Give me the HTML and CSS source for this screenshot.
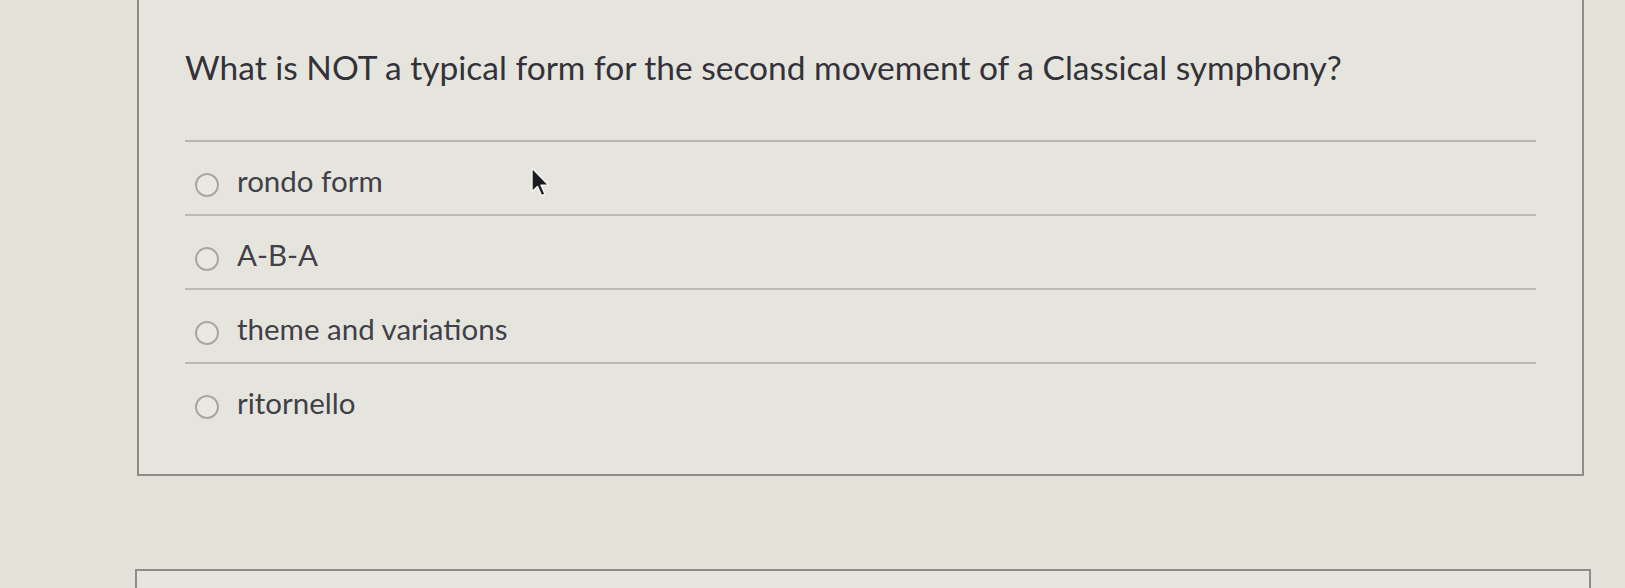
FILE: index.html
```html
<!DOCTYPE html>
<html lang="en">
<head>
<meta charset="utf-8">
<title>Quiz question</title>
<link rel="stylesheet" href="styles.css">
</head>
<body>
<main class="page">
  <section class="card">
    <div class="question">What is NOT a typical form for the second movement of a Classical symphony?</div>
    <ul class="answers">
      <li class="answer"><span class="radio"></span><span class="label">rondo form</span></li>
      <li class="answer"><span class="radio"></span><span class="label">A-B-A</span></li>
      <li class="answer"><span class="radio"></span><span class="label">theme and variations</span></li>
      <li class="answer"><span class="radio"></span><span class="label">ritornello</span></li>
    </ul>
  </section>
  <section class="card next"></section>
  <svg class="cursor" width="19" height="30" viewBox="0 0 12.6 20" aria-hidden="true">
    <path d="M0.6 0.6 L0.6 16.6 L4.3 13 L7 19.2 L9.3 18.2 L6.7 12.1 L11.8 12.1 Z" fill="#1c1b22" stroke="#f4f4f0" stroke-width="1" stroke-linejoin="round"/>
  </svg>
</main>
</body>
</html>
```

FILE: styles.css
```css
html, body {
  margin: 0;
  padding: 0;
}

body {
  background: #e3e2d9;
  font-family: Lato, "Open Sans", "Liberation Sans", sans-serif;
  overflow: hidden;
}

.page {
  position: relative;
  height: 588px;
}

.card {
  margin-left: 137px;
  width: 1447px;
  box-sizing: border-box;
  background: #e6e5dd;
  border: 2px solid #8d8c88;
  border-top: none;
  padding: 0 46px 38px 46px;
}

.question {
  padding-top: 47px;
  padding-bottom: 53px;
  border-bottom: 2px solid #b6b5ae;
  font-size: 33.5px;
  line-height: 40px;
  color: #33323a;
}

.answers {
  list-style: none;
  margin: 0;
  padding: 0;
}

.answer {
  display: flex;
  align-items: flex-start;
  padding: 21px 0 15px 0;
  border-bottom: 2px solid #b9b8b1;
}

.answer:last-child {
  border-bottom: none;
}

.radio {
  flex: none;
  width: 24px;
  height: 24px;
  box-sizing: border-box;
  margin: 10px 18px 0 10px;
  border: 2px solid #a8a7a2;
  border-radius: 50%;
  background: #e9e8e1;
}

.label {
  font-size: 29.5px;
  line-height: 36px;
  color: #413f47;
}

.card.next {
  margin-top: 93px;
  margin-left: 135px;
  width: 1456px;
  height: 40px;
  border-top: 2px solid #8d8c88;
  border-bottom: none;
  padding: 0;
}

.cursor {
  position: absolute;
  left: 531px;
  top: 167px;
}
```
